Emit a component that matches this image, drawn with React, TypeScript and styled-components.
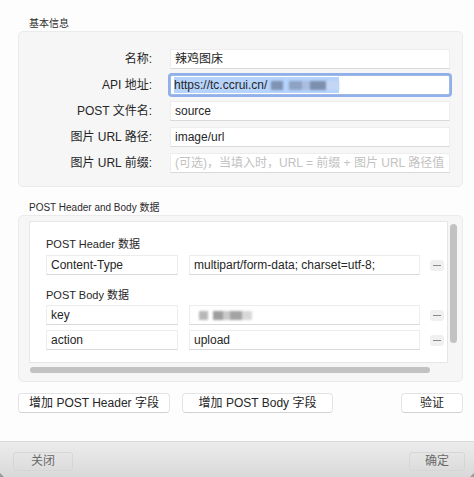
import styled, { createGlobalStyle } from 'styled-components';

const GlobalStyle = createGlobalStyle`
  html, body {
    margin: 0;
    padding: 0;
    height: 100%;
  }
  body {
    font-family: "Liberation Sans", "Noto Sans CJK SC", sans-serif;
    background: #fdfdfd;
    color: #262626;
  }
  #root {
    height: 100%;
  }
`;

const BASIC_FIELDS = [
  { label: '名称:', value: '辣鸡图床' },
  { label: 'API 地址:', value: 'https://tc.ccrui.cn/', focused: true, redacted: true },
  { label: 'POST 文件名:', value: 'source' },
  { label: '图片 URL 路径:', value: 'image/url' },
  { label: '图片 URL 前缀:', value: '', placeholder: '(可选)，当填入时，URL = 前缀 + 图片 URL 路径值' },
];

const HEADER_ROWS = [{ key: 'Content-Type', value: 'multipart/form-data; charset=utf-8;' }];

const BODY_ROWS = [
  { key: 'key', value: '', redacted: true },
  { key: 'action', value: 'upload' },
];

type PairRow = { key: string; value: string; redacted?: boolean };

const PairList = ({ rows }: { rows: PairRow[] }) => (
  <Pairs>
    {rows.map((row, index) => (
      <PairLine key={index}>
        <Field $width={132}>{row.key}</Field>
        <Field $width={231}>
          {row.value}
          {row.redacted && <Smudge $tone="grey" />}
        </Field>
        <MinusButton>
          <MinusGlyph />
        </MinusButton>
      </PairLine>
    ))}
  </Pairs>
);

const App = () => {
  return (
    <Window>
      <GlobalStyle />
      <Main>
        <GroupTitle>基本信息</GroupTitle>
        <GroupBox className="basic">
          <FormGrid>
            {BASIC_FIELDS.map((item, index) => (
              <FormRow key={index}>
                <Label>{item.label}</Label>
                <Field $focused={item.focused} $placeholder={!!item.placeholder}>
                  {item.focused ? (
                    <Selected>
                      {item.value}
                      {item.redacted && <Smudge $tone="blue" />}
                    </Selected>
                  ) : (
                    item.value || item.placeholder
                  )}
                </Field>
              </FormRow>
            ))}
          </FormGrid>
        </GroupBox>

        <GroupTitle className="second">POST Header and Body 数据</GroupTitle>
        <GroupBox className="pairs">
          <ScrollFrame>
            <ScrollContent>
              <SectionTitle>POST Header 数据</SectionTitle>
              <PairList rows={HEADER_ROWS} />
              <SectionTitle className="body">POST Body 数据</SectionTitle>
              <PairList rows={BODY_ROWS} />
            </ScrollContent>
            <VTrack>
              <Thumb className="vertical" />
            </VTrack>
            <HTrack>
              <Thumb className="horizontal" />
            </HTrack>
          </ScrollFrame>
        </GroupBox>

        <ButtonRow>
          <PushButton $width={152}>增加 POST Header 字段</PushButton>
          <PushButton $width={151}>增加 POST Body 字段</PushButton>
          <PushButton $width={62} className="verify">验证</PushButton>
        </ButtonRow>
      </Main>
      <Footer>
        <FooterButton $width={60}>关闭</FooterButton>
        <FooterButton $width={56}>确定</FooterButton>
      </Footer>
    </Window>
  );
};

export default App;

const Window = styled.div`
  height: 477px;
  width: 474px;
  display: flex;
  flex-direction: column;
  overflow: hidden;
  background: #fdfdfd;
`;

const Main = styled.div`
  flex: 1;
  display: flex;
  flex-direction: column;
  padding: 16px 11px 0 18px;
`;

const GroupTitle = styled.div`
  font-size: 10px;
  line-height: 15px;
  height: 15px;
  padding-left: 11px;
  color: #2b2b2b;
  &.second {
    margin-top: 13px;
  }
`;

const GroupBox = styled.div`
  box-sizing: border-box;
  background: #f6f6f6;
  border: 1px solid #ebebeb;
  border-radius: 5px;
  &.basic {
    height: 156px;
    padding: 17px 12px 13px 0;
  }
  &.pairs {
    height: 167px;
    padding: 5px 1px 5px 10px;
    display: flex;
  }
`;

const FormGrid = styled.div`
  display: flex;
  flex-direction: column;
  gap: 6px;
`;

const FormRow = styled.div`
  display: grid;
  grid-template-columns: 133px 1fr;
  column-gap: 18px;
  align-items: center;
`;

const Label = styled.div`
  text-align: right;
  font-size: 12px;
  line-height: 20px;
  color: #262626;
  white-space: nowrap;
`;

const Field = styled.div<{ $focused?: boolean; $placeholder?: boolean; $width?: number }>`
  box-sizing: border-box;
  height: 20px;
  ${p => (p.$width ? `width: ${p.$width}px; flex: none;` : '')}
  display: flex;
  align-items: center;
  padding: 0 4px;
  background: #fff;
  border: 1px solid #ededed;
  border-bottom-color: #d9d9d9;
  font-size: 12px;
  line-height: 18px;
  white-space: nowrap;
  overflow: hidden;
  color: ${p => (p.$placeholder ? '#c2c2c2' : '#262626')};
  ${p =>
    p.$focused
      ? `
    border: 1px solid #9fb9e4;
    box-shadow: 0 0 0 2px #8fb0ea;
    border-radius: 2px;
    padding: 0 3px;
  `
      : ''}
`;

const Selected = styled.span`
  display: inline-flex;
  align-items: center;
  background: #b5d3fb;
  line-height: 16px;
`;

const Smudge = styled.span<{ $tone: 'blue' | 'grey' }>`
  display: inline-block;
  width: ${p => (p.$tone === 'blue' ? 72 : 56)}px;
  height: 9px;
  margin-left: ${p => (p.$tone === 'blue' ? 0 : 2)}px;
  filter: blur(0.8px);
  background: linear-gradient(
    90deg,
    transparent 0 6%,
    ${p => (p.$tone === 'blue' ? '#7f93b4' : '#b8b8b8')} 6% 22%,
    transparent 22% 30%,
    ${p => (p.$tone === 'blue' ? '#8ea2c4' : '#9e9e9e')} 30% 48%,
    ${p => (p.$tone === 'blue' ? '#a9bde0' : '#c9c9c9')} 48% 60%,
    ${p => (p.$tone === 'blue' ? '#7d8fae' : '#a4a4a4')} 60% 82%,
    ${p => (p.$tone === 'blue' ? '#c4d6f4' : '#d8d8d8')} 82% 100%
  );
`;

const ScrollFrame = styled.div`
  flex: 1;
  display: grid;
  grid-template-columns: 1fr 13px;
  grid-template-rows: 1fr 13px;
`;

const ScrollContent = styled.div`
  box-sizing: border-box;
  background: #fff;
  border: 1px solid #e6e6e6;
  padding: 15px 0 0 16px;
  overflow: hidden;
`;

const SectionTitle = styled.div`
  font-size: 11px;
  line-height: 14px;
  color: #262626;
  margin-bottom: 4px;
  &.body {
    margin-top: 13px;
    margin-bottom: 3px;
  }
`;

const Pairs = styled.div`
  display: flex;
  flex-direction: column;
  gap: 5px;
`;

const PairLine = styled.div`
  display: flex;
  align-items: center;
  gap: 11px;
`;

const MinusButton = styled.div`
  flex: none;
  width: 14px;
  height: 11px;
  margin-left: -1px;
  border-radius: 3px;
  background: #f0f0f0;
  display: flex;
  align-items: center;
  justify-content: center;
`;

const MinusGlyph = styled.span`
  width: 8px;
  height: 1px;
  background: #8a8a8a;
`;

const VTrack = styled.div`
  padding: 3px 0 0 2px;
`;

const HTrack = styled.div`
  padding: 4px 0 0 1px;
`;

const Thumb = styled.div`
  background: #c2c2c2;
  border-radius: 4px;
  &.vertical {
    width: 7px;
    height: 119px;
  }
  &.horizontal {
    width: 400px;
    height: 6px;
  }
`;

const ButtonRow = styled.div`
  display: flex;
  gap: 12px;
  margin-top: 11px;
  .verify {
    margin-left: auto;
  }
`;

const PushButton = styled.div<{ $width: number }>`
  box-sizing: border-box;
  width: ${p => p.$width}px;
  height: 20px;
  display: flex;
  align-items: center;
  justify-content: center;
  background: #fff;
  border: 1px solid #e4e4e4;
  border-bottom-color: #d2d2d2;
  border-radius: 4px;
  font-size: 12px;
  line-height: 18px;
  color: #262626;
  white-space: nowrap;
`;

const Footer = styled.div`
  position: relative;
  height: 36px;
  box-sizing: border-box;
  display: flex;
  justify-content: space-between;
  padding: 10px 9px 0 13px;
  border-top: 1px solid #dadada;
  background: linear-gradient(#ececec, #d9d9d9);
  &::before,
  &::after {
    content: '';
    position: absolute;
    bottom: 0;
    width: 0;
    height: 0;
    border-bottom: 4px solid #9a9a9a;
  }
  &::before {
    left: 0;
    border-right: 4px solid transparent;
  }
  &::after {
    right: 0;
    border-left: 4px solid transparent;
  }
`;

const FooterButton = styled.div<{ $width: number }>`
  box-sizing: border-box;
  width: ${p => p.$width}px;
  height: 19px;
  display: flex;
  align-items: center;
  justify-content: center;
  border: 1px solid #d6d6d6;
  border-radius: 3px;
  background: linear-gradient(#e6e6e6, #dcdcdc);
  font-size: 12px;
  line-height: 17px;
  color: #6a6a6a;
`;
